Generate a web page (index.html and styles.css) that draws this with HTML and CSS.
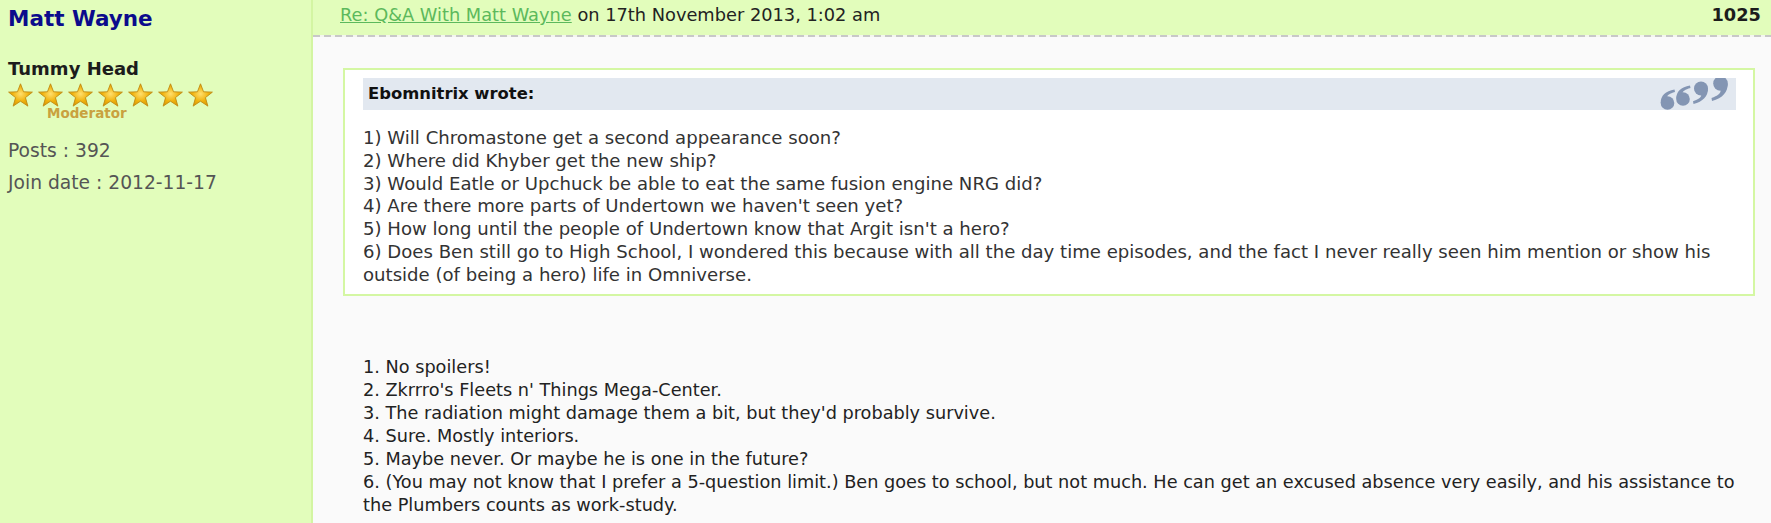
FILE: index.html
```html
<!DOCTYPE html>
<html lang="en">
<head>
<meta charset="utf-8">
<title>Re: Q&amp;A With Matt Wayne</title>
<link rel="stylesheet" href="styles.css">
</head>
<body>
<div class="post">
  <aside class="profile">
    <div class="username">Matt Wayne</div>
    <div class="rank-title">Tummy Head</div>
    <div class="stars">
      <svg class="star" viewBox="0 0 25 24"><use href="#star"/></svg>
      <svg class="star" viewBox="0 0 25 24"><use href="#star"/></svg>
      <svg class="star" viewBox="0 0 25 24"><use href="#star"/></svg>
      <svg class="star" viewBox="0 0 25 24"><use href="#star"/></svg>
      <svg class="star" viewBox="0 0 25 24"><use href="#star"/></svg>
      <svg class="star" viewBox="0 0 25 24"><use href="#star"/></svg>
      <svg class="star" viewBox="0 0 25 24"><use href="#star"/></svg>
    </div>
    <div class="rank-name">Moderator</div>
    <div class="meta">Posts : 392</div>
    <div class="meta">Join date : 2012-11-17</div>
  </aside>
  <main class="content">
    <header class="post-head">
      <div class="post-title"><a href="#" class="topic-link">Re: Q&amp;A With Matt Wayne</a> on 17th November 2013, 1:02 am</div>
      <div class="post-num">1025</div>
    </header>
    <div class="post-sep"></div>
    <div class="post-body">
      <blockquote class="quote">
        <div class="quote-head">
          <span class="quote-author">Ebomnitrix wrote:</span>
          <svg class="quote-icon" viewBox="0 0 80 32" width="80" height="32">
            <g fill="#8395b3">
              <g transform="translate(11.5,25)"><circle r="6.8"/><path d="M-6.8,0 C-6.8,-7.5 -2,-12 7,-13.5 L7.5,-11 C2,-9.5 -0.5,-7.5 0,-6.8 Z"/></g>
              <g transform="translate(27,21)"><circle r="6.8"/><path d="M-6.8,0 C-6.8,-7.5 -2,-12 7,-13.5 L7.5,-11 C2,-9.5 -0.5,-7.5 0,-6.8 Z"/></g>
              <g transform="translate(45,10.5) rotate(180)"><circle r="7"/><path d="M-7,0 C-7,-8 -2,-13 7.5,-15.5 L8,-12.8 C2.5,-10.8 -0.5,-8.5 0,-7 Z"/></g>
              <g transform="translate(64.5,5.5) rotate(180)"><circle r="7.3"/><path d="M-7.3,0 C-7.3,-8.5 -2.5,-14.5 8.5,-17.5 L9,-14.5 C3,-12.5 -0.5,-9.5 0,-7.3 Z"/></g>
            </g>
          </svg>
        </div>
        <div class="quote-text">
          1) Will Chromastone get a second appearance soon?<br>
          2) Where did Khyber get the new ship?<br>
          3) Would Eatle or Upchuck be able to eat the same fusion engine NRG did?<br>
          4) Are there more parts of Undertown we haven't seen yet?<br>
          5) How long until the people of Undertown know that Argit isn't a hero?<br>
          6) Does Ben still go to High School, I wondered this because with all the day time episodes, and the fact I never really seen him mention or show his<br>
          outside (of being a hero) life in Omniverse.
        </div>
      </blockquote>
      <div class="answer">
        1. No spoilers!<br>
        2. Zkrrro's Fleets n' Things Mega-Center.<br>
        3. The radiation might damage them a bit, but they'd probably survive.<br>
        4. Sure. Mostly interiors.<br>
        5. Maybe never. Or maybe he is one in the future?<br>
        6. (You may not know that I prefer a 5-question limit.) Ben goes to school, but not much. He can get an excused absence very easily, and his assistance to<br>
        the Plumbers counts as work-study.
      </div>
    </div>
  </main>
</div>
<svg width="0" height="0" class="defs">
  <defs>
    <radialGradient id="gold" cx="50%" cy="45%" r="60%">
      <stop offset="0" stop-color="#ffdf6e"/>
      <stop offset="0.55" stop-color="#f0b30e"/>
      <stop offset="1" stop-color="#d69505"/>
    </radialGradient>
    <symbol id="star" viewBox="0 0 25 24">
      <polygon points="12.5,0.8 15.56,8.79 24.39,9.14 17.45,14.61 19.85,23.11 12.5,18.2 5.15,23.11 7.55,14.61 0.61,9.14 9.44,8.79" fill="url(#gold)" stroke="#bf8a14" stroke-width="0.9" stroke-linejoin="round"/>
    </symbol>
  </defs>
</svg>
</body>
</html>
```

FILE: styles.css
```css
html, body {
  margin: 0;
  padding: 0;
}
body {
  background: #fafafa;
  font-family: "DejaVu Sans", Verdana, sans-serif;
  color: #333;
}
.defs {
  position: absolute;
  width: 0;
  height: 0;
}
.post {
  display: flex;
  height: 523px;
  overflow: hidden;
}
.profile {
  flex: 0 0 313px;
  background: #e2fdbb;
  border-right: 2px solid #d3f5a2;
  padding-left: 8px;
  box-sizing: border-box;
}
.username {
  margin-top: 6px;
  font-size: 21.5px;
  line-height: 26px;
  font-weight: bold;
  color: #0b0b8c;
}
.rank-title {
  margin-top: 26px;
  font-size: 18px;
  line-height: 22px;
  font-weight: bold;
  color: #1c1c1c;
}
.stars {
  display: flex;
  gap: 5px;
  margin-top: 3px;
  height: 24px;
}
.star {
  width: 25px;
  height: 24px;
}
.rank-name {
  margin-left: 39px;
  margin-top: -1px;
  font-size: 13.5px;
  line-height: 15px;
  font-weight: bold;
  color: #c9a13f;
}
.meta {
  font-size: 18.7px;
  line-height: 32px;
  color: #555;
}
.rank-name + .meta {
  margin-top: 14px;
}
.content {
  flex: 1;
  display: flex;
  flex-direction: column;
  min-width: 0;
}
.post-head {
  height: 35px;
  background: #e2fdbb;
  display: flex;
  justify-content: space-between;
  align-items: flex-start;
  padding: 4px 10px 0 27px;
  box-sizing: border-box;
  font-size: 17.8px;
  line-height: 22px;
}
.post-title {
  color: #222;
  white-space: nowrap;
}
.topic-link {
  color: #5cb95c;
  text-decoration: underline;
}
.post-num {
  font-weight: bold;
  color: #1c1c1c;
}
.post-sep {
  height: 2px;
  background: repeating-linear-gradient(to right, #c8c8c8 0 7px, transparent 7px 11px);
  background-color: #f4f6ef;
}
.post-body {
  flex: 1;
  background: #fafafa;
  padding: 0 16px 0 25px;
}
.quote {
  margin: 31px 0 0 5px;
  border: 2px solid #d4f7a3;
  background: #fff;
  padding: 8px 17px 7px 18px;
}
.quote-head {
  height: 32px;
  background: #e2e8f0;
  display: flex;
  justify-content: space-between;
  align-items: flex-start;
  overflow: hidden;
}
.quote-author {
  padding-left: 5px;
  font-weight: bold;
  font-size: 16.4px;
  line-height: 32px;
  color: #111;
}
.quote-icon {
  display: block;
  flex: 0 0 80px;
}
.quote-text {
  margin-top: 17px;
  font-size: 18.1px;
  line-height: 22.8px;
  color: #333;
  white-space: nowrap;
}
.answer {
  margin: 60px 0 0 25px;
  font-size: 17.7px;
  line-height: 23px;
  color: #222;
  white-space: nowrap;
}
```
